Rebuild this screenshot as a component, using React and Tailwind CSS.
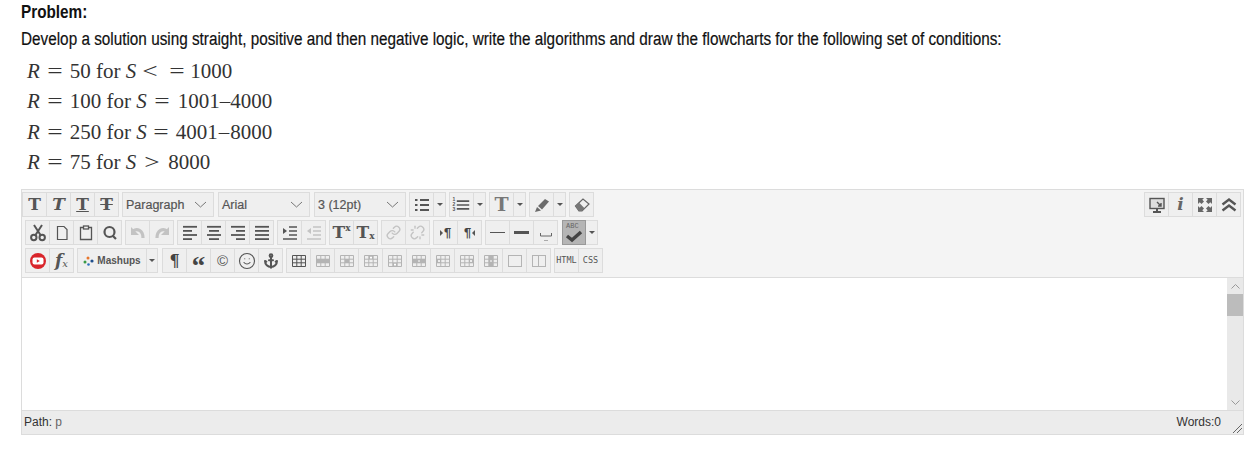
import { Anchor, Link, Smile, Unlink } from 'lucide-react';

const slab = '[font-family:"DejaVu_Serif",serif]';

// one toolbar cell
function Btn({ w = 'w-6', children }) {
  return (
    <div className={`${w} h-full flex items-center justify-center border-r border-[#dcdcdc] box-border shrink-0`}>
      {children}
    </div>
  );
}

function Group({ children, className = '' }) {
  return <div className={`flex h-[25px] border-y border-l border-[#dcdcdc] bg-[#efefef] box-border ${className}`}>{children}</div>;
}

function Caret() {
  return <span className="block w-0 h-0 border-x-[3px] border-x-transparent border-t-[3px] border-t-[#555]" />;
}

function Select({ label, className }) {
  return (
    <div className={`w-[92px] h-[25px] border border-[#dcdcdc] bg-[#efefef] flex items-center justify-between pl-[3px] pr-[6px] box-border ${className}`}>
      <span className="text-[12.500px] pt-px text-[#555] [-webkit-text-stroke:0.2px_#555]">{label}</span>
      <svg width="13" height="7" viewBox="0 0 13 7" fill="none" stroke="#777" strokeWidth="1"><path d="M1 1l5.500 5 5.500-5" /></svg>
    </div>
  );
}

function Ico({ children, size = 18, stroke = '#555', sw = 2, fill = 'none' }) {
  return <svg width={size} height={size} viewBox="0 0 18 18" fill={fill} stroke={stroke} strokeWidth={sw}>{children}</svg>;
}

function Lines({ rows, color = '#555' }) {
  return (
    <Ico stroke={color} sw={1.800}>
      {rows.map(([a, b], i) => <path key={i} d={`M${a} ${2.800 + i * 4.100}H${b}`} />)}
    </Ico>
  );
}

function IndentIcon({ color, out }) {
  return (
    <Ico stroke={color} sw={1.500}>
      <path d="M8 3H16M8 7H16M8 11H16M2 15H16" />
      <path d={out ? 'M6 4V10L2 7z' : 'M2 4V10L6 7z'} fill={color} stroke="none" />
    </Ico>
  );
}

// table icons are a 3x3 grid with some cells shaded
function TableIcon({ shade = [], color = '#b4b4b4', plus }) {
  return (
    <svg width="16" height="16" viewBox="0 0 16 16" fill="none" stroke={color} strokeWidth="1">
      {shade.map(([x, y, w, h], i) => <rect key={i} x={x} y={y} width={w} height={h} fill={color} stroke="none" />)}
      <path d="M1.500 2.500H14.500V13.500H1.500zM1.500 6.200H14.500M1.500 9.800H14.500M5.800 2.500V13.500M10.200 2.500V13.500" />
      {plus && <path d={plus} stroke="#fff" />}
    </svg>
  );
}

function Pilcrow() {
  return <span className="text-[13px] font-bold text-[#444] leading-none">¶</span>;
}

// operator with the wide math spacing of the picture
function Op({ w, children }) {
  return <span className={`inline-block ${w} text-center`}><span className="inline-block scale-x-[1.3]">{children}</span></span>;
}

function Problem() {
  return (
    <div className="pl-[21px] pt-px font-['Liberation_Sans',Arial,sans-serif] text-[#111] shrink-0">
      <p className="text-[18px] leading-[22px] font-bold origin-left scale-x-[0.85] whitespace-nowrap">Problem:</p>
      <p className="text-[18px] leading-[22px] mt-[5px] origin-left scale-x-[0.85] whitespace-nowrap [-webkit-text-stroke:0.2px_#111]">
        Develop a solution using straight, positive and then negative logic, write the algorithms and draw the flowcharts for the following set of conditions:
      </p>
      <div className="mt-[6px] pl-[6px] flex flex-col font-['Liberation_Serif',serif] text-[21px] leading-[30.300px] text-[#333]">
        <p><i>R</i><Op w="w-[30px]">=</Op>50 for <i>S</i><Op w="w-[28px]">&lt;</Op><Op w="w-[26px]">=</Op>1000</p>
        <p><i>R</i><Op w="w-[30px]">=</Op>100 for <i>S</i><Op w="w-[31px]">=</Op>1001–4000</p>
        <p><i>R</i><Op w="w-[30px]">=</Op>250 for <i>S</i><Op w="w-[29px]">=</Op>4001<span className="mx-px">–</span>8000</p>
        <p><i>R</i><Op w="w-[30px]">=</Op>75 for <i>S</i><Op w="w-[32px]">&gt;</Op>8000</p>
      </div>
    </div>
  );
}

function RowOne() {
  const t = `${slab} font-bold text-[17px] text-[#555] leading-none`;
  return (
    <div className="flex items-start justify-between pr-[2px]">
      <div className="flex gap-[3px]">
        <Group>
          <Btn><span className={t}>T</span></Btn>
          <Btn><span className={`${t} italic`}>T</span></Btn>
          <Btn><span className={`${t} underline`}>T</span></Btn>
          <Btn><span className={`${t} line-through`}>T</span></Btn>
        </Group>
        <Select label="Paragraph" className="mr-px" />
        <Select label="Arial" className="mr-px" />
        <Select label="3 (12pt)" />
        <Group>
          <Btn>
            <Ico stroke="#555" sw={1.800}>
              <path d="M7 4H16M7 9H16M7 14H16" />
              <path d="M2 4H4.500M2 9H4.500M2 14H4.500" />
            </Ico>
          </Btn>
          <Btn w="w-[12px]"><Caret /></Btn>
        </Group>
        <Group>
          <Btn>
            <span className="flex items-center gap-px">
              <span className="flex flex-col text-[5px] leading-[5px] font-bold text-[#555]"><span>1</span><span>2</span><span>3</span></span>
              <Ico size={14} stroke="#555" sw={2.200}><path d="M1 4H17M1 9H17M1 14H17" /></Ico>
            </span>
          </Btn>
          <Btn w="w-[12px]"><Caret /></Btn>
        </Group>
        <Group>
          <Btn><span className={`${slab} font-bold text-[19px] leading-none text-[#777]`}>T</span></Btn>
          <Btn w="w-[12px]"><Caret /></Btn>
        </Group>
        <Group>
          <Btn>
            <Ico fill="#6b6b6b" stroke="none"><path d="M5 10L12 3 16 5.500 9 13.500zM4 11L8 14.500 2 16z" /></Ico>
          </Btn>
          <Btn w="w-[12px]"><Caret /></Btn>
        </Group>
        <Group>
          <Btn>
            <Ico sw={1.200} stroke="#666">
              <path d="M2.500 10L10 3 16 8 9 15H6z" />
              <path d="M2.500 10L6 15H9L11.500 12.200 6.200 6.800z" fill="#777" stroke="none" />
            </Ico>
          </Btn>
        </Group>
      </div>
      <Group>
        <Btn>
          <Ico sw={1.400}>
            <rect x="2" y="2.500" width="14" height="10" fill="#ddd" />
            <path d="M9 6l4 4M13 7v3H10" />
            <path d="M9 13v2M5 16H13" strokeWidth="2" />
          </Ico>
        </Btn>
        <Btn><span className={`${slab} font-bold italic text-[17px] leading-none text-[#666]`}>i</span></Btn>
        <Btn>
          <Ico fill="#666" stroke="none">
            <path d="M2 2H8L6.300 3.700 8 5.500 5.500 8 3.700 6.300 2 8zM16 2V8L14.300 6.300 12.500 8 10 5.500 11.700 3.700 10 2zM2 16V10L3.700 11.700 5.500 10 8 12.500 6.300 14.300 8 16zM16 16H10L11.700 14.300 10 12.500 12.500 10 14.300 11.700 16 10z" />
          </Ico>
        </Btn>
        <Btn>
          <Ico sw={2.400}><path d="M2.500 8.500L9 3.500 15.500 8.500M2.500 14.500L9 9.500 15.500 14.500" /></Ico>
        </Btn>
      </Group>
    </div>
  );
}

function RowTwo() {
  const t = `${slab} font-bold text-[17px] text-[#555] leading-none`;
  return (
    <div className="flex gap-[3px] pl-[3px]">
      <Group>
        <Btn>
          <Ico sw={2}>
            <path d="M5 1L11.500 11M13 1L6.500 11" />
            <circle cx="4.800" cy="13.500" r="2.700" /><circle cx="13.200" cy="13.500" r="2.700" />
          </Ico>
        </Btn>
        <Btn>
          <Ico sw={1.200}><path d="M4.500 2.500H11L14 5.500V15.500H4.500z" /></Ico>
        </Btn>
        <Btn>
          <Ico sw={1.300}><path d="M6 3.500H3.500V15.500H14.500V3.500H12" /><rect x="6.500" y="2" width="5" height="3" /></Ico>
        </Btn>
        <Btn>
          <Ico sw={2.200}><circle cx="8.500" cy="8" r="5" /><path d="M11.500 11.500L15 15" /></Ico>
        </Btn>
      </Group>
      <Group>
        <Btn>
          <Ico stroke="#c3c3c3" sw={3.200}><path d="M4 7C8 4 14 6 14 14" /><path d="M2 3V11H10z" fill="#c3c3c3" stroke="none" /></Ico>
        </Btn>
        <Btn>
          <Ico stroke="#c3c3c3" sw={3.200}><path d="M14 7C10 4 4 6 4 14" /><path d="M16 3V11H8z" fill="#c3c3c3" stroke="none" /></Ico>
        </Btn>
      </Group>
      <Group>
        <Btn><Lines rows={[[2, 16], [2, 11], [2, 16], [2, 11]]} /></Btn>
        <Btn><Lines rows={[[2, 16], [4, 14], [2, 16], [4, 14]]} /></Btn>
        <Btn><Lines rows={[[2, 16], [7, 16], [2, 16], [7, 16]]} /></Btn>
        <Btn><Lines rows={[[2, 16], [2, 16], [2, 16], [2, 16]]} /></Btn>
      </Group>
      <Group>
        <Btn><IndentIcon color="#555" /></Btn>
        <Btn><IndentIcon color="#c3c3c3" out /></Btn>
      </Group>
      <Group>
        <Btn><span className={`${t} flex items-start`}>T<span className="text-[9px] leading-[9px]">x</span></span></Btn>
        <Btn><span className={`${t} flex items-end`}>T<span className="text-[9px] leading-[9px]">x</span></span></Btn>
      </Group>
      <Group>
        <Btn><Link size={15} color="#c3c3c3" strokeWidth={2.200} /></Btn>
        <Btn><Unlink size={15} color="#c3c3c3" strokeWidth={2.200} /></Btn>
      </Group>
      <Group>
        <Btn>
          <span className="flex items-center gap-px"><span className="block w-0 h-0 border-y-[3px] border-y-transparent border-l-[3px] border-l-[#555]" /><Pilcrow /></span>
        </Btn>
        <Btn>
          <span className="flex items-center gap-px"><Pilcrow /><span className="block w-0 h-0 border-y-[3px] border-y-transparent border-r-[3px] border-r-[#555]" /></span>
        </Btn>
      </Group>
      <Group>
        <Btn><span className="block w-[15px] h-px bg-[#555]" /></Btn>
        <Btn><span className="block w-[15px] h-[3px] bg-[#555]" /></Btn>
        <Btn>
          <Ico stroke="#666" sw={1}><path d="M3.500 9V12H14.500V9" /><path d="M7 16.500H11" stroke="#aaa" /></Ico>
        </Btn>
      </Group>
      <div className="flex h-[25px] ml-px">
        <div className="w-[24px] border border-[#999] bg-[#b5b5b5] relative flex items-center justify-center box-border">
          <span className="absolute top-[2px] left-[3px] text-[7px] leading-[7px] text-[#666] font-['Liberation_Mono',monospace]">ABC</span>
          <svg width="18" height="13" viewBox="0 0 18 13" fill="none" stroke="#444" strokeWidth="3.500" className="mt-[7px]"><path d="M2 6l5 4 9-8" /></svg>
        </div>
        <div className="w-[12px] border border-l-0 border-[#dcdcdc] bg-[#efefef] flex items-center justify-center box-border"><Caret /></div>
      </div>
    </div>
  );
}

function RowThree() {
  const mono = "font-['DejaVu_Sans_Mono',monospace] text-[8.500px] text-[#555]";
  return (
    <div className="flex gap-[3px] pl-[3px]">
      <Group>
        <Btn>
          <svg width="18" height="18" viewBox="0 0 18 18">
            <circle cx="9" cy="9" r="8" fill="#d9252b" />
            <rect x="3.500" y="5.500" width="11" height="7" rx="2" fill="#fff" />
            <path d="M7.800 7.200v3.600L10.800 9z" fill="#d9252b" />
          </svg>
        </Btn>
        <Btn>
          <span className={`${slab} font-bold italic text-[17px] leading-none text-[#555] flex items-end`}>f<span className="text-[10px] leading-[10px] font-normal">x</span></span>
        </Btn>
      </Group>
      <Group>
        <Btn w="w-[69px]">
          <svg width="12" height="10" viewBox="0 0 12 10" className="mr-[2px]">
            <circle cx="5" cy="2" r="1.500" fill="#e8762c" />
            <circle cx="2" cy="6" r="1.500" fill="#3a9b46" />
            <circle cx="5.500" cy="8.500" r="1.300" fill="#2f6fc0" />
            <circle cx="9" cy="5" r="1.600" fill="#1f4e8c" />
          </svg>
          <span className="text-[10px] font-bold text-[#555] font-['Liberation_Sans',sans-serif]">Mashups</span>
        </Btn>
        <Btn w="w-[11px]"><Caret /></Btn>
      </Group>
      <Group className="ml-px">
        <Btn><span className={`${slab} text-[#444] text-[16px] font-bold leading-none`}>¶</span></Btn>
        <Btn><span className="font-['Liberation_Serif',serif] text-[#444] text-[27px] font-bold leading-none mt-[12px]">“</span></Btn>
        <Btn><span className="text-[15px] leading-none text-[#555]">©</span></Btn>
        <Btn><Smile size={18} color="#555" strokeWidth={1.500} /></Btn>
        <Btn><Anchor size={16} color="#555" strokeWidth={3} /></Btn>
      </Group>
      <Group>
        <Btn><TableIcon color="#555" /></Btn>
        <Btn><TableIcon shade={[[2, 6, 12, 4]]} /></Btn>
        <Btn><TableIcon shade={[[6, 6, 4, 4]]} /></Btn>
        <Btn><TableIcon shade={[[6, 3, 4, 3]]} plus="M8 3.500V6M7 4.500H9" /></Btn>
        <Btn><TableIcon shade={[[6, 10, 4, 3]]} plus="M8 10.500V13M7 11.500H9" /></Btn>
        <Btn><TableIcon shade={[[2, 6, 12, 4]]} plus="M7 8H9" /></Btn>
        <Btn><TableIcon shade={[[2, 6, 4, 4]]} plus="M4 7V9M3 8H5" /></Btn>
        <Btn><TableIcon shade={[[10, 6, 4, 4]]} plus="M12 7V9M11 8H13" /></Btn>
        <Btn><TableIcon shade={[[6, 3, 4, 10]]} plus="M7 8H9" /></Btn>
        <Btn><span className="block w-[14px] h-[12px] border border-[#b4b4b4]" /></Btn>
        <Btn><span className="block w-[14px] h-[12px] border border-[#b4b4b4] bg-[linear-gradient(#b4b4b4,#b4b4b4)] bg-[length:1px_100%] bg-center bg-no-repeat" /></Btn>
      </Group>
      <Group>
        <Btn><span className={mono}>HTML</span></Btn>
        <Btn><span className={mono}>CSS</span></Btn>
      </Group>
    </div>
  );
}

function Scrollbar() {
  return (
    <div className="w-[16px] bg-[#e9e9e9] flex flex-col items-center justify-between">
      <div className="w-full flex flex-col">
        <div className="h-[16px] flex items-center justify-center">
          <svg width="9" height="5" viewBox="0 0 9 5" fill="none" stroke="#999"><path d="M.500 4.500l4-4 4 4" /></svg>
        </div>
        <div className="h-[22px] bg-[#bcbcbc]" />
      </div>
      <div className="h-[16px] flex items-center justify-center">
        <svg width="9" height="5" viewBox="0 0 9 5" fill="none" stroke="#999"><path d="M.500 .500l4 4 4-4" /></svg>
      </div>
    </div>
  );
}

export default function App() {
  return (
    <div className="w-[1258px] h-[452px] bg-white overflow-hidden flex flex-col">
      <Problem />
      <div className="ml-[21px] mt-[12px] w-[1223px] h-[246px] shrink-0 border border-[#dcdcdc] box-border flex flex-col font-['Liberation_Sans',Arial,sans-serif]">
        <div className="h-[88px] shrink-0 bg-[#f4f4f4] border-b border-[#dcdcdc] flex flex-col gap-[3px] pt-[2px]">
          <RowOne />
          <RowTwo />
          <RowThree />
        </div>
        <div className="flex-1 flex justify-between bg-white min-h-0">
          <div className="flex-1" />
          <Scrollbar />
        </div>
        <div className="h-[24px] shrink-0 bg-[#ececec] border-t border-[#dcdcdc] flex items-center justify-between pl-[2px] pr-[6px] pb-px text-[12px] text-[#333] relative">
          <span>Path: <span className="text-[#666]">p</span></span>
          <span className="mr-[16px]">Words:0</span>
          <svg width="10" height="10" viewBox="0 0 10 10" stroke="#666" className="absolute right-px bottom-px"><path d="M1 10L10 1M5 10L10 5" /></svg>
        </div>
      </div>
    </div>
  );
}
